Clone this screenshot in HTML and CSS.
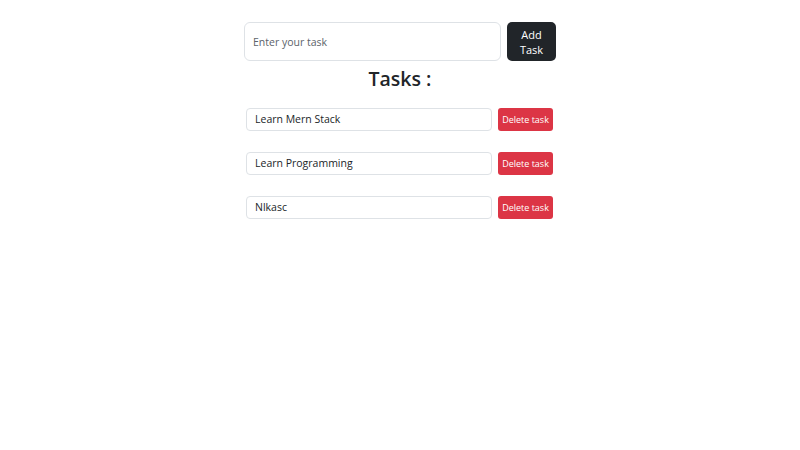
FILE: index.html
```html
<!DOCTYPE html>
<html>
<head>
<meta charset="utf-8">
<link rel="stylesheet" href="styles.css">
</head>
<body>
<div class="app">
  <div class="add-row">
    <input class="add-input" type="text" placeholder="Enter your task">
    <button class="add-btn">Add<br>Task</button>
  </div>
  <h1 class="title">Tasks :</h1>
  <ul class="tasks">
    <li class="task"><div class="task-text">Learn Mern Stack</div><button class="del-btn">Delete task</button></li>
    <li class="task"><div class="task-text">Learn Programming</div><button class="del-btn">Delete task</button></li>
    <li class="task"><div class="task-text">Nlkasc</div><button class="del-btn">Delete task</button></li>
  </ul>
</div>
</body>
</html>
```
FILE: styles.css
```css
* { box-sizing: border-box; }
body {
  margin: 0;
  background: #ffffff;
  font-family: "Open Sans", "Noto Sans", sans-serif;
  color: #212529;
}
.app {
  width: 312px;
  margin: 0 auto;
  padding-top: 22px;
}
.add-row {
  display: flex;
  gap: 6px;
}
.add-input {
  width: 257px;
  height: 39px;
  border: 1px solid #dee2e6;
  border-radius: 6px;
  padding: 0 8px;
  font-family: inherit;
  font-size: 10.5px;
  color: #212529;
  outline: none;
}
.add-input::placeholder { color: #5c636a; }
.add-btn {
  width: 49px;
  height: 39px;
  background: #212529;
  color: #fff;
  border: none;
  border-radius: 5px;
  font-family: inherit;
  font-size: 11px;
  line-height: 15px;
  padding: 0;
}
.title {
  margin: 5px 0 0;
  text-align: center;
  font-size: 19.5px;
  font-weight: 600;
  line-height: 26px;
}
.tasks {
  list-style: none;
  margin: 0;
  padding: 16px 3px 0 2px;
  display: flex;
  flex-direction: column;
  gap: 21px;
}
.task {
  display: flex;
  gap: 6px;
  height: 23px;
}
.task-text {
  width: 246px;
  flex-shrink: 0;
  border: 1px solid #dee2e6;
  border-radius: 4px;
  padding: 0 8px;
  font-size: 10.5px;
  line-height: 21px;
}
.del-btn {
  width: 55px;
  flex-shrink: 0;
  background: #dc3545;
  color: #fff;
  border: none;
  border-radius: 3px;
  font-family: inherit;
  font-size: 9px;
  padding: 0;
}
```
